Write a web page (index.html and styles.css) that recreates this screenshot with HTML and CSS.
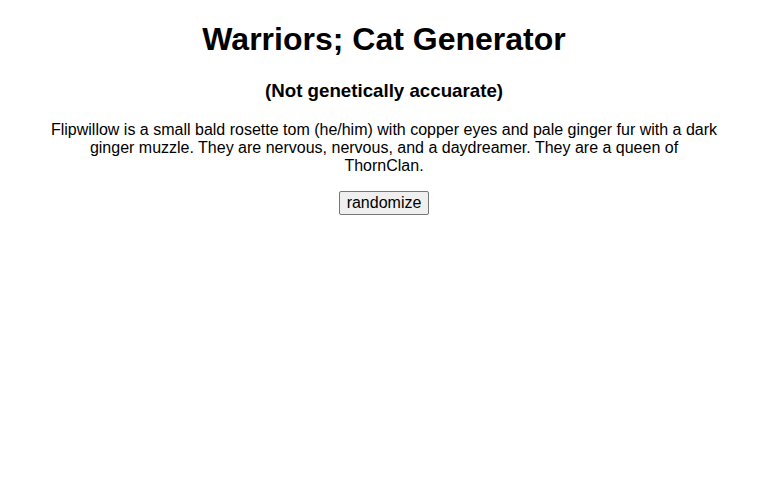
FILE: index.html
```html
<!DOCTYPE html>
<html>
<head>
<meta charset="utf-8">
<link rel="stylesheet" href="styles.css">
</head>
<body class="page">
<h1 class="title">Warriors; Cat Generator</h1>
<h3 class="subtitle">(Not genetically accuarate)</h3>
<p class="desc">Flipwillow is a small bald rosette tom (he/him) with copper eyes and pale ginger fur with a dark ginger muzzle. They are nervous, nervous, and a daydreamer. They are a queen of ThornClan.</p>
<button class="btn">randomize</button>
</body>
</html>
```
FILE: styles.css
```css
.page {
  margin: 0 8px;
  font-family: "Liberation Sans", Arial, sans-serif;
  text-align: center;
  color: #000;
  background: #fff;
}
.title {
  font-size: 32px;
  margin: 21.44px 0;
}
.subtitle {
  font-size: 18.72px;
  margin: 18.72px 0;
}
.desc {
  font-size: 16px;
  margin: 16px auto;
  max-width: 669px;
}
.btn {
  font-family: "Liberation Sans", Arial, sans-serif;
  font-size: 16px;
  padding: 2px 7px;
  background: #efefef;
  border: 1px solid #767676;
  border-radius: 2px;
  color: #000;
}
```
